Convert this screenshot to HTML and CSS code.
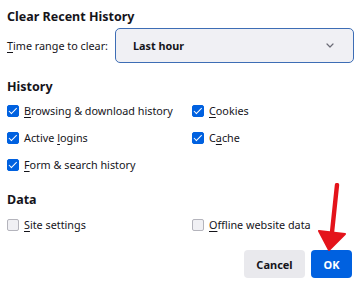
FILE: index.html
```html
<!DOCTYPE html>
<html>
<head>
<meta charset="utf-8">
<link rel="stylesheet" href="styles.css">
</head>
<body>
<div class="dialog">
  <h1 class="title">Clear Recent History</h1>
  <div class="range">
    <span class="range-label"><u>T</u>ime range to clear:</span>
    <div class="select">
      <span class="select-value">Last hour</span>
      <svg class="chev" width="8" height="5" viewBox="0 0 8 5"><path d="M1 1 L4 4 L7 1" fill="none" stroke="#6b6b76" stroke-width="1.2" stroke-linecap="round" stroke-linejoin="round"/></svg>
    </div>
  </div>

  <h2 class="section">History</h2>
  <div class="grid">
    <label class="item"><span class="box on"></span><span><u>B</u>rowsing &amp; download history</span></label>
    <label class="item"><span class="box on"></span><span><u>C</u>ookies</span></label>
    <label class="item"><span class="box on"></span><span>Active <u>l</u>ogins</span></label>
    <label class="item"><span class="box on"></span><span>C<u>a</u>che</span></label>
    <label class="item"><span class="box on"></span><span><u>F</u>orm &amp; search history</span></label>
  </div>

  <h2 class="section data">Data</h2>
  <div class="grid">
    <label class="item"><span class="box"></span><span><u>S</u>ite settings</span></label>
    <label class="item"><span class="box"></span><span><u>O</u>ffline website data</span></label>
  </div>

  <div class="buttons">
    <button class="btn cancel">Cancel</button>
    <button class="btn ok">OK</button>
  </div>

  <svg class="arrow" width="40" height="72" viewBox="0 0 40 72">
    <path d="M21 2 L15.5 54" stroke="#e4141b" stroke-width="4.4" stroke-linecap="round" fill="none"/>
    <path d="M3 48 L29 51 L13 67 Z" fill="#e4141b" stroke="#e4141b" stroke-width="2" stroke-linejoin="round"/>
  </svg>
</div>
</body>
</html>
```
FILE: styles.css
```css
* { box-sizing: border-box; }
html, body { margin: 0; padding: 0; background: #ffffff; }
body {
  font-family: "Noto Sans", "Open Sans", sans-serif;
  color: #15141a;
  font-size: 10.8px;
  width: 358px;
  height: 290px;
  overflow: hidden;
}
.dialog {
  position: relative;
  padding: 9px 4px 0 7px;
}
.title {
  margin: 0;
  font-size: 12.5px;
  line-height: 16px;
  font-weight: 700;
}
.range {
  margin-top: 3px;
  display: flex;
  align-items: center;
  gap: 5px;
}
.range-label { width: 103px; white-space: nowrap; }
.select {
  flex: 1;
  height: 35px;
  border: 1.5px solid #3d6db5;
  border-radius: 5px;
  background: #f0f0f4;
  display: flex;
  align-items: center;
  justify-content: space-between;
  padding: 0 19px 0 17px;
}
.select-value { font-weight: 700; }
.chev { display: block; }
.section {
  margin: 16px 0 2px;
  font-size: 12.5px;
  line-height: 16px;
  font-weight: 700;
}
.section.data { margin-top: 14px; margin-bottom: 3px; }
.grid {
  display: grid;
  grid-template-columns: 185px 1fr;
}
.item {
  height: 27px;
  display: flex;
  align-items: center;
  gap: 5px;
  white-space: nowrap;
}
.box {
  width: 12px;
  height: 12px;
  border-radius: 2px;
  background: #f0f0f4;
  border: 1px solid #b4b4bc;
  flex: none;
  position: relative;
}
.box.on {
  background: #0061e0;
  border-color: #0061e0;
}
.box.on::after {
  content: "";
  position: absolute;
  left: 3.3px;
  top: 0.6px;
  width: 3px;
  height: 6.5px;
  border: solid #fff;
  border-width: 0 1.4px 1.4px 0;
  transform: rotate(45deg);
}
u { text-decoration-thickness: 1px; text-underline-offset: 1.5px; }
.buttons {
  margin-top: 12px;
  display: flex;
  justify-content: flex-end;
  gap: 6px;
  padding-right: 2px;
}
.btn {
  font-family: inherit;
  font-size: 11px;
  font-weight: 700;
  height: 28px;
  border: none;
  border-radius: 4px;
  padding: 0;
}
.cancel { width: 61px; background: #e9e9ed; color: #15141a; }
.ok { width: 41px; background: #0061e0; color: #fff; }
.arrow {
  position: absolute;
  left: 316px;
  top: 183px;
}
```
